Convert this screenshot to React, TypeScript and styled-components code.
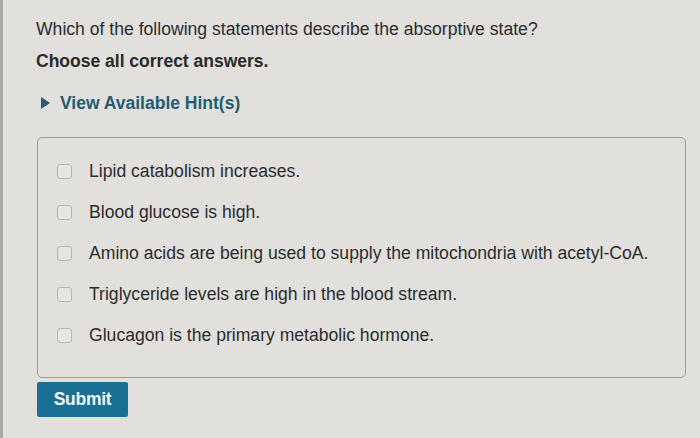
import React from 'react';
import styled, { createGlobalStyle } from 'styled-components';

const GlobalStyle = createGlobalStyle`
    html, body {
        margin: 0;
        padding: 0;
        background: #dddcd8;
    }
    body {
        font-family: "Liberation Sans", Arial, sans-serif;
        color: #2b2b2b;
    }
`;

const Page = styled.div`
    width: 700px;
    height: 438px;
    box-sizing: border-box;
    border-left: 3px solid #a9a8a5;
    background: #e1e0dc;
    padding: 17px 14px 0 33px;
    display: flex;
    flex-direction: column;
    align-items: flex-start;
`;

const Question = styled.p`
    margin: 0;
    font-size: 17.6px;
    line-height: 24px;
    color: #2c2c2c;
`;

const Instruction = styled.p`
    margin: 8px 0 0;
    font-size: 17.5px;
    line-height: 24px;
    font-weight: bold;
    color: #2a2a2a;
`;

const HintToggle = styled.div`
    margin-top: 18px;
    display: flex;
    align-items: center;
    gap: 10px;
    font-size: 17.5px;
    line-height: 24px;
    font-weight: bold;
    color: #245c72;
    padding-left: 5px;
`;

const Caret = styled.span`
    width: 0;
    height: 0;
    border-top: 6px solid transparent;
    border-bottom: 6px solid transparent;
    border-left: 9px solid #245c72;
`;

const AnswerBox = styled.div`
    margin-top: 22px;
    margin-left: 1px;
    width: 649px;
    box-sizing: border-box;
    border: 1px solid #9c9b98;
    border-radius: 5px;
    padding: 22px 0 31px 19px;
    display: flex;
    flex-direction: column;
    gap: 19px;
`;

const Option = styled.label`
    display: flex;
    align-items: center;
    gap: 17px;
    font-size: 17.6px;
    line-height: 22px;
    color: #2c2c2c;
`;

const Box = styled.span`
    width: 13px;
    height: 13px;
    flex: none;
    border: 1px solid #b6b5b1;
    border-radius: 3px;
    background: #e6e5e1;
`;

const SubmitButton = styled.button`
    margin-top: 4px;
    margin-left: 1px;
    width: 91px;
    height: 35px;
    border: none;
    border-radius: 2px;
    background: #196f94;
    color: #f2f6f8;
    font-family: "Liberation Sans", Arial, sans-serif;
    font-size: 17.5px;
    font-weight: bold;
    letter-spacing: -0.3px;
`;

const options = [
    'Lipid catabolism increases.',
    'Blood glucose is high.',
    'Amino acids are being used to supply the mitochondria with acetyl-CoA.',
    'Triglyceride levels are high in the blood stream.',
    'Glucagon is the primary metabolic hormone.',
];

export default function App() {
    return (
        <>
            <GlobalStyle />
            <Page>
                <Question>Which of the following statements describe the absorptive state?</Question>
                <Instruction>Choose all correct answers.</Instruction>
                <HintToggle>
                    <Caret />
                    View Available Hint(s)
                </HintToggle>
                <AnswerBox>
                    {options.map((text) => (
                        <Option key={text}>
                            <Box />
                            {text}
                        </Option>
                    ))}
                </AnswerBox>
                <SubmitButton>Submit</SubmitButton>
            </Page>
        </>
    );
}
